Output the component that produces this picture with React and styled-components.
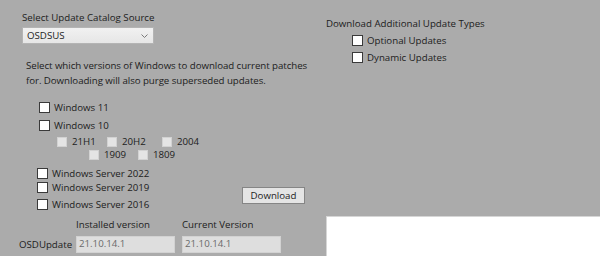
import React from 'react';
import styled, { createGlobalStyle } from 'styled-components';

const Global = createGlobalStyle`
  html, body { margin: 0; padding: 0; background: #ababab; }
  body {
    font-family: "Open Sans", "Noto Sans", sans-serif;
    font-size: 9.7px;
    color: #1c1c1c;
  }
`;

const Page = styled.div`
  width: 600px;
  height: 256px;
  overflow: hidden;
  display: grid;
  grid-template-columns: 326px 274px;
  background: #ababab;
`;

const LeftCol = styled.div`
  display: flex;
  flex-direction: column;
  box-sizing: border-box;
  height: 256px;
  padding: 11px 21px 3px 0;
`;

const RightCol = styled.div`
  display: flex;
  flex-direction: column;
  box-sizing: border-box;
  height: 256px;
  padding-top: 17px;
`;

const Label = styled.div`
  line-height: 13px;
  white-space: nowrap;
  margin-left: ${(p) => p.$x || 0}px;
  margin-top: ${(p) => p.$top || 0}px;
`;

const Combo = styled.div`
  box-sizing: border-box;
  margin-left: 22px;
  margin-top: 3px;
  width: 132px;
  height: 17px;
  border: 1px solid #b4b4b4;
  background: linear-gradient(#f1f1f1, #e6e6e6);
  display: flex;
  align-items: center;
  justify-content: space-between;
  padding: 0 5px 0 4px;
  line-height: 13px;
`;

const Paragraph = styled.p`
  margin: 14px 0 0 26px;
  line-height: 15px;
  white-space: nowrap;
  letter-spacing: -0.05px;
`;

const CheckRow = styled.div`
  display: flex;
  align-items: center;
  gap: 4px;
  height: 13px;
  line-height: 13px;
  white-space: nowrap;
  margin-left: ${(p) => p.$x || 0}px;
  margin-top: ${(p) => p.$top || 0}px;
`;

const Box = styled.span`
  box-sizing: border-box;
  flex: none;
  width: ${(p) => (p.$disabled ? 10 : 11)}px;
  height: ${(p) => (p.$disabled ? 10 : 11)}px;
  border: 1px solid ${(p) => (p.$disabled ? '#d2d2d2' : '#3a3a3a')};
  background: ${(p) => (p.$disabled ? '#e4e4e4' : '#ffffff')};
`;

const SubRow = styled.div`
  display: flex;
  margin-left: ${(p) => p.$x}px;
  margin-top: ${(p) => p.$top || 0}px;
`;

const SubItem = styled(CheckRow)`
  gap: 5px;
  width: ${(p) => (p.$w ? `${p.$w}px` : 'auto')};
`;

const ServerBlock = styled.div`
  display: flex;
  align-items: flex-start;
  margin-top: 6px;
`;

const ServerList = styled.div`
  display: flex;
  flex-direction: column;
  margin-left: 37px;
`;

const Button = styled.button`
  box-sizing: border-box;
  margin-left: auto;
  margin-top: 20px;
  width: 63px;
  height: 17px;
  padding: 0;
  border: 1px solid #858585;
  background: #e4e4e4;
  font: inherit;
  color: #1c1c1c;
  line-height: 13px;
`;

const Versions = styled.div`
  margin-top: auto;
  margin-left: 19px;
  display: grid;
  grid-template-columns: 50px 99px 99px;
  column-gap: 7px;
  row-gap: 5px;
  align-items: center;
`;

const Field = styled.div`
  box-sizing: border-box;
  height: 17px;
  border: 1px solid #d2d2d2;
  background: #dedede;
  color: #6a6a6a;
  padding: 0 2px;
  line-height: 13px;
`;

const Options = styled.div`
  display: flex;
  flex-direction: column;
  margin-left: 26px;
`;

const WhitePanel = styled.div`
  margin-top: auto;
  height: 39px;
  background: #ffffff;
  border-top: 1px solid #d6d6d6;
  border-left: 1px solid #d6d6d6;
`;

const Chevron = () => (
  <svg width="7" height="4" viewBox="0 0 7 4">
    <path d="M0.5 0.5 L3.5 3.5 L6.5 0.5" fill="none" stroke="#7a7a7a" strokeWidth="1" />
  </svg>
);

const Check = ({ children, ...rest }) => (
  <CheckRow {...rest}>
    <Box />
    <span>{children}</span>
  </CheckRow>
);

const Sub = ({ children, w }) => (
  <SubItem $w={w}>
    <Box $disabled />
    <span>{children}</span>
  </SubItem>
);

export default function App() {
  return (
    <>
      <Global />
      <Page>
        <LeftCol>
          <Label $x={22}>Select Update Catalog Source</Label>
          <Combo>
            <span>OSDSUS</span>
            <Chevron />
          </Combo>
          <Paragraph>
            Select which versions of Windows to download current patches
            <br />
            for. Downloading will also purge superseded updates.
          </Paragraph>
          <Check $x={39} $top={13}>Windows 11</Check>
          <Check $x={39} $top={5}>Windows 10</Check>
          <SubRow $x={57} $top={3}>
            <Sub w={50}>21H1</Sub>
            <Sub w={55}>20H2</Sub>
            <Sub>2004</Sub>
          </SubRow>
          <SubRow $x={89}>
            <Sub w={49}>1909</Sub>
            <Sub>1809</Sub>
          </SubRow>
          <ServerBlock>
            <ServerList>
              <Check>Windows Server 2022</Check>
              <Check $top={1}>Windows Server 2019</Check>
              <Check $top={4}>Windows Server 2016</Check>
            </ServerList>
            <Button>Download</Button>
          </ServerBlock>
          <Versions>
            <span />
            <Label>Installed version</Label>
            <Label>Current Version</Label>
            <Label>OSDUpdate</Label>
            <Field>21.10.14.1</Field>
            <Field>21.10.14.1</Field>
          </Versions>
        </LeftCol>
        <RightCol>
          <Label>Download Additional Update Types</Label>
          <Options>
            <Check $top={4}>Optional Updates</Check>
            <Check $top={4}>Dynamic Updates</Check>
          </Options>
          <WhitePanel />
        </RightCol>
      </Page>
    </>
  );
}
